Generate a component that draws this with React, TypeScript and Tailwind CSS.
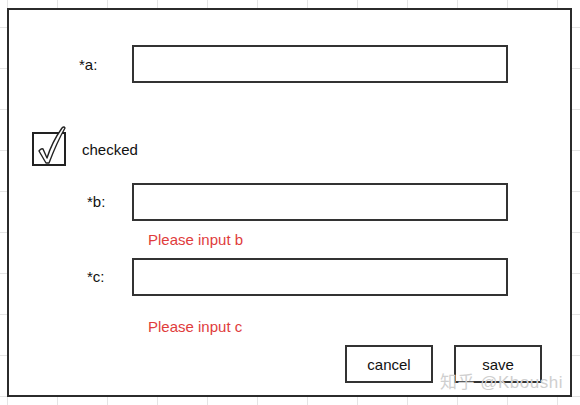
export default function App() {
  return (
    <div
      className="w-[580px] h-[405px] overflow-hidden bg-white pt-[8px] pl-[7px] relative"
      style={{
        fontFamily: '"Liberation Sans", Arial, sans-serif',
        backgroundImage:
          "linear-gradient(to right, #e4e4e4 1px, transparent 1px), linear-gradient(to bottom, #e4e4e4 1px, transparent 1px)",
        backgroundSize: "50px 41px",
        backgroundPosition: "7px 27px",
      }}
    >
      <div className="w-[565px] h-[389px] border-2 border-[#2b2b2b] bg-white flex flex-col text-[15px] text-[#111]">
        {/* a */}
        <div className="flex items-center mt-[35px] h-[38px]">
          <div className="w-[123px] pl-[70px] pt-[3px]">*a:</div>
          <div className="w-[376px] h-[38px] border-2 border-[#333]" />
        </div>

        {/* checkbox */}
        <div className="flex items-center mt-[49px] h-[34px]">
          <div className="ml-[23px] w-[34px] h-[34px] relative">
            <div className="absolute inset-0 border-2 border-[#222]" />
            <svg
              className="absolute left-0 top-[-8px]"
              width="36"
              height="42"
              viewBox="0 0 36 42"
            >
              <path
                d="M7 27 Q9 24 11 25 L15 34 Q20 18 30 4 Q32 2 33 4 Q25 18 17 39 L14 39 Z"
                fill="white"
                stroke="#222"
                strokeWidth="1.4"
                strokeLinejoin="round"
              />
            </svg>
          </div>
          <div className="ml-[16px] pt-[3px]">checked</div>
        </div>

        {/* b */}
        <div className="flex items-center mt-[17px] h-[38px]">
          <div className="w-[123px] pl-[78px]">*b:</div>
          <div className="w-[376px] h-[38px] border-2 border-[#333]" />
        </div>
        <div className="mt-[10px] pl-[139px] h-[18px] leading-[18px] text-[#e03c3c]">
          Please input b
        </div>

        {/* c */}
        <div className="flex items-center mt-[9px] h-[38px]">
          <div className="w-[123px] pl-[78px]">*c:</div>
          <div className="w-[376px] h-[38px] border-2 border-[#333]" />
        </div>
        <div className="mt-[22px] pl-[139px] h-[18px] leading-[18px] text-[#e03c3c]">
          Please input c
        </div>

        {/* buttons */}
        <div className="flex mt-[9px] pl-[336px] gap-[21px]">
          <button className="w-[88px] h-[38px] border-2 border-[#333] bg-white pt-[3px]">
            cancel
          </button>
          <button className="w-[88px] h-[38px] border-2 border-[#333] bg-white pt-[3px]">
            save
          </button>
        </div>
      </div>
      <div
        className="absolute left-[440px] top-[370px] text-[17px] text-[#cfcfcf] tracking-[0.5px]"
        style={{ fontFamily: '"Liberation Sans", "Noto Sans CJK SC", sans-serif' }}
      >
        知乎 @Kboushi
      </div>
    </div>
  );
}
